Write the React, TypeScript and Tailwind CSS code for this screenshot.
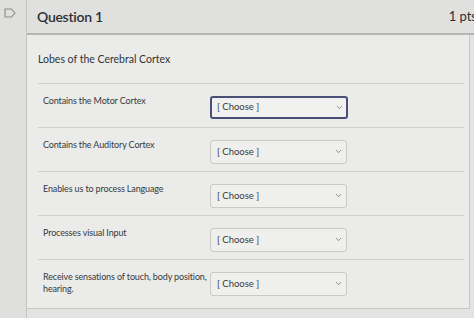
import { ChevronDown } from 'lucide-react';

const rows = [
  { label: ['Contains the Motor Cortex'], focused: true },
  { label: ['Contains the Auditory Cortex'] },
  { label: ['Enables us to process Language'] },
  { label: ['Processes visual Input'] },
  { label: ['Receive sensations of touch, body position,', 'hearing.'] },
];

function Select({ focused }: { focused?: boolean }) {
  return (
    <div
      className={
        focused
          ? 'flex h-[23px] w-[138px] items-center justify-between rounded-[3px] border-2 border-[#4a4f78] bg-[#f1f1ef] pl-[5px] pr-[2px]'
          : 'flex h-[24px] w-[137px] items-center justify-between rounded-[3px] border border-[#c9c9c6] bg-[#efefed] pl-[6px] pr-[3px]'
      }
    >
      <span className="text-[9.5px] text-[#3a3a3a]">[ Choose ]</span>
      <ChevronDown className="h-[9px] w-[9px] text-[#6b6b6b]" strokeWidth={2} />
    </div>
  );
}

export default function App() {
  return (
    <div
      className="flex h-[318px] w-[474px] overflow-hidden bg-[#e3e3e1] text-[#2f3437]"
      style={{ fontFamily: 'Lato, "Open Sans", sans-serif' }}
    >
      {/* left gutter with bookmark */}
      <div className="w-[27px] shrink-0 border-r border-[#c4c4c2] bg-[#dfdfdd] pl-[4px] pt-[8px]">
        <svg width="12" height="10" viewBox="0 0 12 10" fill="none">
          <path d="M1 1h6.5l3.5 4-3.5 4H1z" stroke="#8b8b8b" strokeWidth="1.1" strokeLinejoin="round" />
        </svg>
      </div>

      <div className="flex w-[460px] shrink-0 flex-col">
        <div className="flex h-[35px] items-center justify-between border-b-2 border-[#b5b5b3] bg-[#e0e0de] pl-[10px] pr-[10px]">
          <span className="text-[14px] font-semibold tracking-[-0.02em] text-[#2c2f33]">Question 1</span>
          <span className="text-[13px] text-[#2c2f33]">1 pts</span>
        </div>

        <div className="w-[443px] border-b border-r border-[#c7c7c5] bg-[#ebebe9] pb-[5px]">
          <div className="px-[11px] pt-[17px] pb-[15px] text-[10.5px]">Lobes of the Cerebral Cortex</div>
          <div className="ml-[11px] mr-[5px]">
            {rows.map((r, i) => (
              <div key={i} className="flex h-[44px] items-start border-t border-[#cfcfcd] pt-[12px]">
                <div className="-mt-[1px] w-[172px] shrink-0 whitespace-nowrap pl-[5px] text-[9px] leading-[12px] tracking-[-0.015em] text-[#363a3e]">
                  {r.label.map((l) => (
                    <div key={l}>{l}</div>
                  ))}
                </div>
                <Select focused={r.focused} />
              </div>
            ))}
          </div>
        </div>
      </div>
    </div>
  );
}
